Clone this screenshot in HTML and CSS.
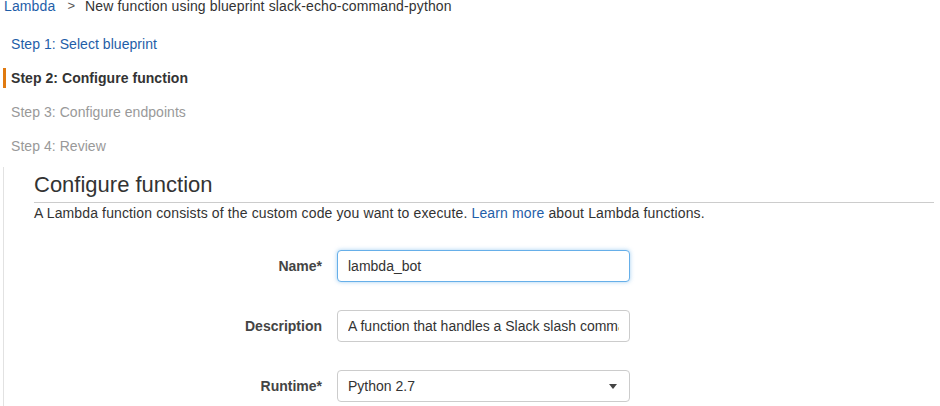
FILE: index.html
```html
<!DOCTYPE html>
<html lang="en">
<head>
<meta charset="utf-8">
<title>New function using blueprint slack-echo-command-python</title>
<link rel="stylesheet" href="styles.css">
</head>
<body>
<nav class="breadcrumb">
  <a class="crumb-link" href="#">Lambda</a>
  <span class="crumb-sep">&gt;</span>
  <span class="crumb-current">New function using blueprint slack-echo-command-python</span>
</nav>
<ul class="steps">
  <li class="step"><a class="step-label step-done" href="#">Step 1: Select blueprint</a></li>
  <li class="step"><span class="step-label step-active">Step 2: Configure function</span></li>
  <li class="step"><span class="step-label step-todo">Step 3: Configure endpoints</span></li>
  <li class="step"><span class="step-label step-todo">Step 4: Review</span></li>
</ul>
<section class="panel">
  <h1 class="panel-title">Configure function</h1>
  <p class="panel-desc">A Lambda function consists of the custom code you want to execute. <a class="link" href="#">Learn more</a> about Lambda functions.</p>
  <form class="form">
    <div class="form-row">
      <label class="form-label" for="fn-name">Name*</label>
      <input class="form-input is-focused" id="fn-name" type="text" value="lambda_bot">
    </div>
    <div class="form-row">
      <label class="form-label" for="fn-desc">Description</label>
      <input class="form-input" id="fn-desc" type="text" value="A function that handles a Slack slash command and echoes the details back to the user.">
    </div>
    <div class="form-row">
      <label class="form-label" for="fn-runtime">Runtime*</label>
      <div class="select">
        <span class="select-value">Python 2.7</span>
        <span class="select-caret"></span>
      </div>
    </div>
  </form>
</section>
</body>
</html>
```
FILE: styles.css
```css
* { box-sizing: border-box; }
html, body { margin: 0; padding: 0; background: #fff; }
body {
  font-family: "Liberation Sans", Arial, Helvetica, sans-serif;
  font-size: 14px;
  color: #333;
  overflow: hidden;
}
a { text-decoration: none; }

.breadcrumb {
  display: flex;
  align-items: center;
  line-height: 12px;
  padding-left: 4px;
  white-space: nowrap;
  letter-spacing: 0.13px;
}
.crumb-link { color: #1f5ea8; }
.crumb-sep {
  color: #555;
  margin: 0 10px 0 12px;
  font-size: 13px;
}
.crumb-current { color: #333; }

.steps {
  list-style: none;
  margin: 15px 0 0 0;
  padding: 0;
}
.step {
  display: flex;
  align-items: center;
  height: 34px;
}
.step-label {
  margin-left: 3px;
  padding-left: 5px;
  border-left: 3px solid transparent;
  line-height: 20px;
  letter-spacing: 0.05px;
}
.step-done { color: #1f5ea8; }
.step-active {
  font-weight: bold;
  color: #333;
  border-left-color: #e07a10;
}
.step-todo { color: #999; }

.panel {
  margin: 4px 0 0 3px;
  border-left: 1px solid #e2e2e2;
  padding: 5px 6px 0 30px;
  height: 260px;
}
.panel-title {
  margin: 0;
  font-size: 22px;
  font-weight: normal;
  line-height: 26px;
  color: #333;
  padding-bottom: 4px;
  border-bottom: 1px solid #cccccc;
}
.panel-desc {
  margin: 2px 0 0 0;
  line-height: 17px;
  color: #333;
  letter-spacing: 0.13px;
}
.link { color: #1f5ea8; }

.form {
  margin-top: 28px;
}
.form-row {
  display: grid;
  grid-template-columns: 288px 293px;
  column-gap: 15px;
  align-items: center;
  height: 32px;
  margin-bottom: 28px;
}
.form-label {
  text-align: right;
  font-weight: bold;
  color: #444;
}
.form-input,
.select {
  height: 32px;
  width: 293px;
  border: 1px solid #ccc;
  border-radius: 4px;
  padding: 0 10px;
  font-family: inherit;
  font-size: 14px;
  color: #333;
  background: #fff;
  outline: none;
}
.form-input.is-focused {
  border-color: #66afe9;
  box-shadow: 0 0 4px rgba(102, 175, 233, 0.6);
}
.select {
  display: flex;
  align-items: center;
  justify-content: space-between;
}
.select-caret {
  width: 0;
  height: 0;
  border-left: 4.5px solid transparent;
  border-right: 4.5px solid transparent;
  border-top: 5px solid #444;
  margin-right: 2px;
}
```
